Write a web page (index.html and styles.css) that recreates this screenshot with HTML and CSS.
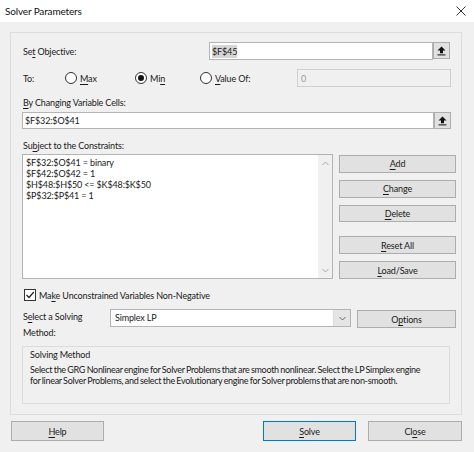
FILE: index.html
```html
<!DOCTYPE html>
<html lang="en">

<head>
  <meta charset="UTF-8">
  <meta name="viewport" content="width=device-width, initial-scale=1.0">
  <title>Solver Parameters</title>
  <link rel="stylesheet" href="styles.css">
</head>

<body>
  <div class="window">
    <div class="titlebar">
      <span class="title">Solver Parameters</span>
      <svg class="close-x" width="10" height="10" viewBox="0 0 10 10">
        <path d="M0.5 0.5 L9.5 9.5 M9.5 0.5 L0.5 9.5" stroke="#222" stroke-width="0.9" fill="none" />
      </svg>
    </div>

    <div class="dialog">
      <div class="panel">
        <div class="row objective">
          <span class="lbl lbl-obj">Se<u>t</u> Objective:</span>
          <div class="refedit ref-obj">
            <div class="field"><span class="sel">$F$45</span></div>
            <button class="refbtn">
              <svg width="9" height="10" viewBox="0 0 9 10">
                <polygon points="4.5,0.5 8.5,4.5 6,4.5 6,7.2 3,7.2 3,4.5 0.5,4.5" fill="#111" />
                <rect x="0.5" y="8.4" width="8" height="1" fill="#111" />
              </svg>
            </button>
          </div>
        </div>

        <div class="row to">
          <span class="lbl lbl-to">To:</span>
          <span class="opt opt-max"><span class="radio"></span><span><u>M</u>ax</span></span>
          <span class="opt opt-min"><span class="radio checked"></span><span>Mi<u>n</u></span></span>
          <span class="opt opt-val"><span class="radio"></span><span><u>V</u>alue Of:</span></span>
          <div class="field value">0</div>
        </div>

        <div class="caption cap-cells"><u>B</u>y Changing Variable Cells:</div>
        <div class="refedit ref-cells">
          <div class="field">$F$32:$O$41</div>
          <button class="refbtn">
            <svg width="9" height="10" viewBox="0 0 9 10">
              <polygon points="4.5,0.5 8.5,4.5 6,4.5 6,7.2 3,7.2 3,4.5 0.5,4.5" fill="#111" />
              <rect x="0.5" y="8.4" width="8" height="1" fill="#111" />
            </svg>
          </button>
        </div>

        <div class="caption cap-cons">Su<u>b</u>ject to the Constraints:</div>
        <div class="constraints">
          <div class="listbox">
            <div class="items">
              <div>$F$32:$O$41 = binary</div>
              <div>$F$42:$O$42 = 1</div>
              <div>$H$48:$H$50 &lt;= $K$48:$K$50</div>
              <div>$P$32:$P$41 = 1</div>
            </div>
            <div class="scroll">
              <svg width="7" height="5" viewBox="0 0 7 5"><path d="M0.5 4 L3.5 1 L6.5 4" stroke="#a6a6a6" fill="none" /></svg>
              <svg width="7" height="5" viewBox="0 0 7 5"><path d="M0.5 1 L3.5 4 L6.5 1" stroke="#a6a6a6" fill="none" /></svg>
            </div>
          </div>
          <div class="side-buttons">
            <button class="btn"><u>A</u>dd</button>
            <button class="btn"><u>C</u>hange</button>
            <button class="btn"><u>D</u>elete</button>
            <button class="btn btn-reset"><u>R</u>eset All</button>
            <button class="btn"><u>L</u>oad/Save</button>
          </div>
        </div>

        <div class="check-row">
          <span class="checkbox">
            <svg width="10" height="10" viewBox="0 0 10 10"><path d="M1.5 5 L4 7.5 L8.8 2" stroke="#222" stroke-width="1.2" fill="none" /></svg>
          </span>
          <span>Ma<u>k</u>e Unconstrained Variables Non-Negative</span>
        </div>

        <div class="method-row">
          <span class="lbl lbl-method">S<u>e</u>lect a Solving<br>Method:</span>
          <div class="combo">
            <div class="combo-text">Simplex LP</div>
            <div class="combo-arrow">
              <svg width="7" height="5" viewBox="0 0 7 5"><path d="M0.5 1 L3.5 4 L6.5 1" stroke="#666" fill="none" /></svg>
            </div>
          </div>
          <button class="btn btn-options">O<u>p</u>tions</button>
        </div>

        <div class="groupbox">
          <div class="group-title">Solving Method</div>
          <p class="group-text">Select the GRG Nonlinear engine for Solver Problems that are smooth nonlinear. Select the LP Simplex engine<br>for linear Solver Problems, and select the Evolutionary engine for Solver problems that are non-smooth.</p>
        </div>
      </div>

      <div class="footer">
        <button class="btn btn-foot"><u>H</u>elp</button>
        <button class="btn btn-foot btn-solve"><u>S</u>olve</button>
        <button class="btn btn-foot btn-close">Cl<u>o</u>se</button>
      </div>
    </div>
  </div>
</body>

</html>
```

FILE: styles.css
```css
body {
  margin: 0;
  background: #f0f0f0;
  font-family: "Lato", "Liberation Sans", sans-serif;
  font-size: 9px;
  letter-spacing: -0.15px;
  color: #1a1a1a;
}

u {
  text-decoration-thickness: 1px;
  text-underline-offset: 1.5px;
}

.window {
  width: 474px;
  height: 452px;
  background: #f0f0f0;
}

.titlebar {
  height: 22px;
  background: #fff;
  display: flex;
  align-items: center;
  justify-content: space-between;
  padding: 0 8px 0 5px;
}

.title {
  font-size: 10px;
  color: #111;
}

.close-x {
  margin-top: -1px;
}

.dialog {
  padding: 10px 12px 0 10px;
}

.panel {
  height: 381px;
  border: 1px solid #dcdcdc;
  padding: 0 11px 0 12px;
}

.row {
  display: flex;
  align-items: center;
  height: 18px;
}

.objective {
  margin-top: 9px;
}

.to {
  margin-top: 9px;
}

.lbl-obj {
  width: 186px;
  flex: none;
}

.lbl-to {
  width: 42px;
  flex: none;
}

.field {
  box-sizing: border-box;
  height: 18px;
  background: #fff;
  border: 1px solid #b4b4b4;
  display: flex;
  align-items: center;
  padding: 0 2px;
  flex: none;
}

.sel {
  background: #d6d6d6;
  padding: 1px 0;
}

.refedit {
  display: flex;
}

.ref-obj .field {
  width: 224px;
}

.ref-cells {
  margin-left: -1px;
}

.ref-cells .field {
  width: 412px;
  height: 17px;
}

.refbtn {
  box-sizing: border-box;
  width: 17px;
  height: 17px;
  padding: 0;
  margin: 0;
  background: #e1e1e1;
  border: 1px solid #adadad;
  display: flex;
  align-items: center;
  justify-content: center;
  flex: none;
}

.opt {
  display: flex;
  align-items: center;
  gap: 3px;
  flex: none;
}

.opt-max {
  width: 70px;
}

.opt-min {
  width: 65px;
}

.opt-val {
  width: 97px;
}

.radio {
  box-sizing: border-box;
  width: 12px;
  height: 12px;
  border: 1px solid #333;
  border-radius: 50%;
  background: #fff;
  display: flex;
  align-items: center;
  justify-content: center;
}

.radio.checked::after {
  content: "";
  width: 6px;
  height: 6px;
  border-radius: 50%;
  background: #111;
}

.field.value {
  width: 154px;
  background: #f0f0f0;
  border-color: #cfcfcf;
  color: #9a9a9a;
  padding-left: 3px;
}

.caption {
  line-height: 12px;
}

.cap-cells {
  margin-top: 10px;
  margin-bottom: 3px;
}

.cap-cons {
  margin-top: 11px;
  margin-bottom: 2px;
}

.constraints {
  display: flex;
  height: 125px;
  margin-left: -1px;
}

.listbox {
  box-sizing: border-box;
  width: 311px;
  height: 125px;
  border: 1px solid #b4b4b4;
  background: #fff;
  display: flex;
  flex: none;
}

.items {
  flex: 1;
  padding: 2px 3px;
  line-height: 11px;
}

.scroll {
  width: 14px;
  background: #f0f0f0;
  display: flex;
  flex-direction: column;
  justify-content: space-between;
  align-items: center;
  padding: 6px 0 5px;
}

.side-buttons {
  display: flex;
  flex-direction: column;
  gap: 7px;
  margin-left: 6px;
  padding-top: 1px;
  flex: none;
}

.btn {
  box-sizing: border-box;
  font: inherit;
  letter-spacing: inherit;
  color: #1a1a1a;
  background: #e1e1e1;
  border: 1px solid #adadad;
  padding: 0;
  margin: 0;
}

.side-buttons .btn {
  width: 117px;
  height: 19px;
}

.side-buttons .btn-reset {
  margin-top: 7px;
}

.check-row {
  display: flex;
  align-items: center;
  gap: 3px;
  margin-top: 10px;
  margin-left: 1px;
  height: 12px;
}

.checkbox {
  box-sizing: border-box;
  width: 12px;
  height: 12px;
  border: 1px solid #333;
  background: #fff;
  display: flex;
  align-items: center;
  justify-content: center;
}

.method-row {
  display: flex;
  align-items: flex-start;
  margin-top: 8px;
}

.lbl-method {
  width: 87px;
  line-height: 16px;
  flex: none;
}

.combo {
  box-sizing: border-box;
  width: 241px;
  height: 18px;
  border: 1px solid #b4b4b4;
  background: #fff;
  display: flex;
  flex: none;
}

.combo-text {
  flex: 1;
  padding-left: 4px;
  line-height: 16px;
}

.combo-arrow {
  width: 16px;
  background: #e5e5e5;
  border-left: 1px solid #dcdcdc;
  display: flex;
  align-items: center;
  justify-content: center;
}

.btn-options {
  width: 99px;
  height: 18px;
  margin-left: 6px;
  margin-top: 1px;
  flex: none;
}

.groupbox {
  box-sizing: border-box;
  width: 428px;
  height: 58px;
  margin-top: 5px;
  margin-left: -1px;
  border: 1px solid #dcdcdc;
  padding: 2px 7px;
}

.group-title {
  line-height: 12px;
}

.group-text {
  margin: 3px 0 0;
  line-height: 11px;
  white-space: nowrap;
  letter-spacing: -0.3px;
  word-spacing: -0.5px;
}

.footer {
  display: flex;
  margin-top: 6px;
  margin-left: 1px;
}

.btn-foot {
  width: 93px;
  height: 20px;
}

.btn-solve {
  margin-left: 159px;
  border-color: #0078d7;
}

.btn-close {
  margin-left: 12px;
  width: 94px;
}
```
